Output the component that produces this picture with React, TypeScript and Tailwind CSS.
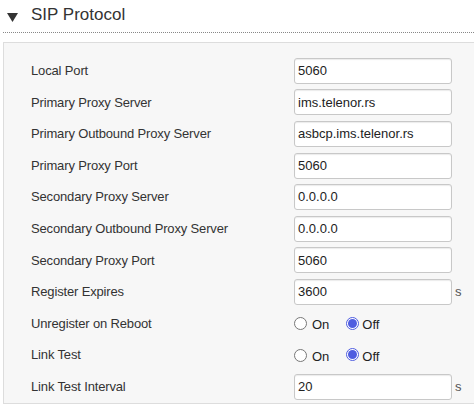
import React from "react";

type Row =
  | { label: string; kind: "text"; value: string; unit?: string }
  | { label: string; kind: "radio"; on: boolean };

const rows: Row[] = [
  { label: "Local Port", kind: "text", value: "5060" },
  { label: "Primary Proxy Server", kind: "text", value: "ims.telenor.rs" },
  { label: "Primary Outbound Proxy Server", kind: "text", value: "asbcp.ims.telenor.rs" },
  { label: "Primary Proxy Port", kind: "text", value: "5060" },
  { label: "Secondary Proxy Server", kind: "text", value: "0.0.0.0" },
  { label: "Secondary Outbound Proxy Server", kind: "text", value: "0.0.0.0" },
  { label: "Secondary Proxy Port", kind: "text", value: "5060" },
  { label: "Register Expires", kind: "text", value: "3600", unit: "s" },
  { label: "Unregister on Reboot", kind: "radio", on: false },
  { label: "Link Test", kind: "radio", on: false },
  { label: "Link Test Interval", kind: "text", value: "20", unit: "s" },
];

function Radio({ checked }: { checked: boolean }) {
  return checked ? (
    <span className="inline-flex h-[13px] w-[13px] items-center justify-center rounded-full border border-[#4f5de0] bg-white">
      <span className="h-[9px] w-[9px] rounded-full bg-[#4f5de0]" />
    </span>
  ) : (
    <span className="inline-block h-[13px] w-[13px] rounded-full border border-[#777] bg-white" />
  );
}

export default function App() {
  return (
    <div className="h-[407px] w-[474px] overflow-hidden bg-white text-[#333]" style={{ fontFamily: '"Liberation Sans", Arial, sans-serif' }}>
      <div className="flex h-[33px] items-start border-b border-dotted border-[#888] ml-[3px]">
        <div className="flex items-center pt-[4px]">
          <svg width="11" height="9" viewBox="0 0 11 9" className="ml-[4px] mt-[4px]">
            <polygon points="0,0 11,0 5.5,9" fill="#333" />
          </svg>
          <span className="ml-[13px] text-[17px] leading-[22px] text-[#333]">SIP Protocol</span>
        </div>
      </div>
      <div className="ml-[3px] mt-[9px] w-[480px] border border-[#ddd] bg-[#f7f7f7] pt-[12px]">
        {rows.map((r) => (
          <div key={r.label} className="flex h-[31.6px] items-center">
            <div className="w-[290px] pl-[27px] text-[13px] tracking-[-0.15px] text-[#333]">{r.label}</div>
            {r.kind === "text" ? (
              <div className="flex items-center">
                <div className="flex h-[26px] w-[158px] items-center rounded-[3px] border border-[#c8c8c8] bg-white pl-[3px] text-[13px] text-[#222] shadow-[inset_0_1px_1px_rgba(0,0,0,0.08)]">
                  {r.value}
                </div>
                {r.unit && <span className="ml-[3px] text-[13px] text-[#555]">{r.unit}</span>}
              </div>
            ) : (
              <div className="flex items-center text-[13px] text-[#222]">
                <Radio checked={false} />
                <span className="ml-[5px] mt-[3px]">On</span>
                <span className="ml-[17px]"><Radio checked={true} /></span>
                <span className="ml-[3px] mt-[3px]">Off</span>
              </div>
            )}
          </div>
        ))}
      </div>
    </div>
  );
}
